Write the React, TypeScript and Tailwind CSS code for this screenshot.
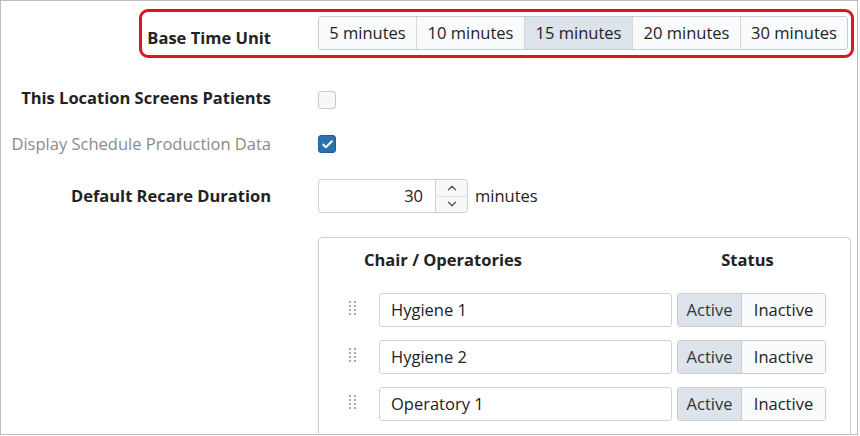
import { Check, ChevronDown, ChevronUp } from "lucide-react";

const units = ["5 minutes", "10 minutes", "15 minutes", "20 minutes", "30 minutes"];
const unitWidths = ["w-[97px]", "w-[108px]", "w-[108px]", "w-[108px]", "w-[107px]"];
const chairs = ["Hygiene 1", "Hygiene 2", "Operatory 1", ""];

function DragHandle() {
  return (
    <div className="grid grid-cols-2 gap-x-[2px] gap-y-[2px] w-[7px]">
      {Array.from({ length: 8 }).map((_, i) => (
        <span key={i} className="block h-[2px] w-[2px] rounded-full bg-[#7f90a6]" />
      ))}
    </div>
  );
}

function StatusToggle({ labels }: { labels: boolean }) {
  return (
    <div className="flex h-[34px] w-[149px] overflow-hidden rounded-[3px] border border-[#c9cdd2]">
      <div className="flex w-[64px] items-center justify-center border-r border-[#c9cdd2] bg-[#dce3ea] text-[#333]">
        {labels && "Active"}
      </div>
      <div className="flex flex-1 items-center justify-center bg-[#f9fafb] text-[#222]">
        {labels && "Inactive"}
      </div>
    </div>
  );
}

export default function App() {
  return (
    <div
      className="h-[435px] w-[858px] overflow-hidden border border-[#bdbdbd] bg-white text-[16.5px] text-[#222]"
      style={{ fontFamily: '"Open Sans", "Liberation Sans", sans-serif' }}
    >
      <div className="pt-[15px]">
        {/* base time unit */}
        <div className="relative flex h-[34px] items-center">
          <div className="pointer-events-none absolute left-[138px] top-[-7px] h-[49px] w-[715px] rounded-[9px] border-[3px] border-[#e0141e]" />
          <div className="w-[270px] text-right font-bold">
            <span className="relative top-[5px]">Base Time Unit</span>
          </div>
          <div className="ml-[47px] flex h-[34px] overflow-hidden rounded-[3px] border border-[#c9cdd2]">
            {units.map((u, i) => (
              <div
                key={u}
                className={`flex ${unitWidths[i]} items-center justify-center ${
                  i > 0 ? "border-l border-[#d4d8dc]" : ""
                } ${i === 2 ? "bg-[#dce3ea]" : "bg-[#f9fafb]"}`}
              >
                {u}
              </div>
            ))}
          </div>
        </div>

        {/* screens patients */}
        <div className="mt-[41px] flex h-[18px] items-center">
          <div className="relative top-[-2px] w-[270px] text-right font-bold">This Location Screens Patients</div>
          <div className="ml-[47px] h-[18px] w-[18px] rounded-[3px] border border-[#c8c8c8] bg-[#f7f7f7]" />
        </div>

        {/* display schedule */}
        <div className="mt-[26px] flex h-[18px] items-center">
          <div className="w-[270px] text-right text-[#8a8a8a]">Display Schedule Production Data</div>
          <div className="ml-[47px] flex h-[18px] w-[18px] items-center justify-center rounded-[3px] border border-[#1f5f94] bg-[#2b72ad]">
            <Check className="h-[13px] w-[13px] text-white" strokeWidth={3.5} />
          </div>
        </div>

        {/* recare duration */}
        <div className="mt-[26px] flex h-[34px] items-center">
          <div className="w-[270px] text-right font-bold">Default Recare Duration</div>
          <div className="ml-[47px] flex h-[34px] w-[150px] overflow-hidden rounded-[3px] border border-[#cfd3d7]">
            <div className="flex flex-1 items-center justify-end pr-[12px]">30</div>
            <div className="flex w-[32px] flex-col border-l border-[#cfd3d7] bg-[#f6f7f8]">
              <div className="flex flex-1 items-center justify-center border-b border-[#dfe2e5]">
                <ChevronUp className="h-[14px] w-[14px] text-[#555]" strokeWidth={2.2} />
              </div>
              <div className="flex flex-1 items-center justify-center">
                <ChevronDown className="h-[14px] w-[14px] text-[#555]" strokeWidth={2.2} />
              </div>
            </div>
          </div>
          <span className="ml-[7px]">minutes</span>
        </div>

        {/* chairs */}
        <div className="ml-[317px] mt-[24px] w-[533px] rounded-t-[4px] border border-[#cfcfcf] pb-4">
          <div className="flex h-[45px] items-center font-bold">
            <div className="ml-[45px] w-[309px]">Chair / Operatories</div>
            <div className="w-[149px] text-center">Status</div>
          </div>
          <div className="flex flex-col gap-[13px] pt-[10px]">
            {chairs.map((c, i) => (
              <div key={i} className="flex h-[34px] items-center">
                <div className="ml-[30px] mb-[4px] w-[30px]">
                  <DragHandle />
                </div>
                <div className="flex h-[34px] w-[293px] items-center rounded-[3px] border border-[#cfd3d7] px-[11px]">
                  {c}
                </div>
                <div className="ml-[5px]">
                  <StatusToggle labels={c !== ""} />
                </div>
              </div>
            ))}
          </div>
        </div>
      </div>
    </div>
  );
}
